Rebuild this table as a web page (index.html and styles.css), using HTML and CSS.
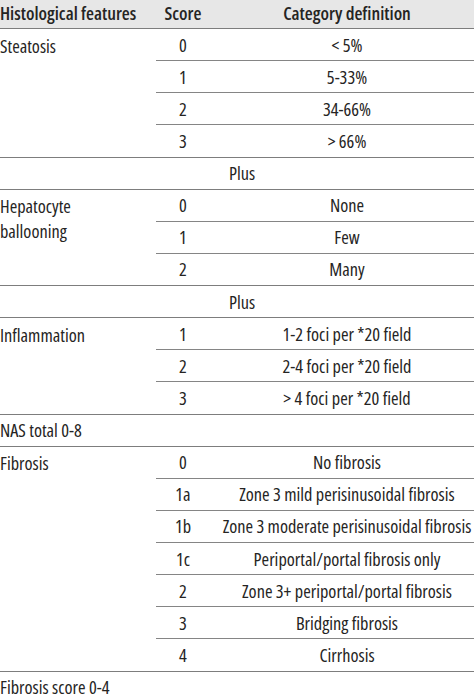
FILE: index.html
```html
<!DOCTYPE html>
<html lang="en">
<head>
<meta charset="utf-8">
<link rel="stylesheet" href="styles.css">
</head>
<body>
<table class="nas">
  <thead>
    <tr class="head">
      <th class="c-feat">Histological features</th>
      <th class="c-score">Score</th>
      <th class="c-def">Category definition</th>
    </tr>
  </thead>
  <tbody>
    <tr><td class="feat end" rowspan="4">Steatosis</td><td class="score">0</td><td class="def">&lt; 5%</td></tr>
    <tr><td class="score">1</td><td class="def">5-33%</td></tr>
    <tr><td class="score">2</td><td class="def">34-66%</td></tr>
    <tr><td class="score end">3</td><td class="def end">&gt; 66%</td></tr>
    <tr><td class="plus end" colspan="3">Plus</td></tr>
    <tr><td class="feat end" rowspan="3">Hepatocyte<br>ballooning</td><td class="score">0</td><td class="def">None</td></tr>
    <tr><td class="score">1</td><td class="def">Few</td></tr>
    <tr><td class="score end">2</td><td class="def end">Many</td></tr>
    <tr><td class="plus end" colspan="3">Plus</td></tr>
    <tr><td class="feat end" rowspan="3">Inflammation</td><td class="score">1</td><td class="def">1-2 foci per *20 field</td></tr>
    <tr><td class="score">2</td><td class="def">2-4 foci per *20 field</td></tr>
    <tr><td class="score end">3</td><td class="def end">&gt; 4 foci per *20 field</td></tr>
    <tr><td class="total end" colspan="3">NAS total 0-8</td></tr>
    <tr><td class="feat end" rowspan="7">Fibrosis</td><td class="score">0</td><td class="def">No fibrosis</td></tr>
    <tr><td class="score">1a</td><td class="def">Zone 3 mild perisinusoidal fibrosis</td></tr>
    <tr><td class="score">1b</td><td class="def">Zone 3 moderate perisinusoidal fibrosis</td></tr>
    <tr><td class="score">1c</td><td class="def">Periportal/portal fibrosis only</td></tr>
    <tr><td class="score">2</td><td class="def">Zone 3+ periportal/portal fibrosis</td></tr>
    <tr><td class="score">3</td><td class="def">Bridging fibrosis</td></tr>
    <tr><td class="score end">4</td><td class="def end">Cirrhosis</td></tr>
    <tr><td class="total" colspan="3">Fibrosis score 0-4</td></tr>
  </tbody>
</table>
</body>
</html>
```
FILE: styles.css
```css
html, body {
  margin: 0;
  padding: 0;
  background: #ffffff;
  overflow: hidden;
}

body {
  width: 474px;
  height: 699px;
  font-family: "Open Sans", "Liberation Sans", sans-serif;
  font-stretch: 75%;
  font-size: 18.3px;
  color: #252423;
}

.nas {
  width: 484px;
  border-collapse: collapse;
  border-spacing: 0;
  table-layout: fixed;
}

.nas th,
.nas td {
  padding: 0;
  white-space: nowrap;
}

.head th {
  background: #e7e7e7;
  height: 28px;
  line-height: 25px;
  vertical-align: top;
  font-weight: 650;
  border-bottom: 1px solid #7d7d7d;
}

.c-feat { width: 156px; text-align: left; }
.c-score { width: 54px; text-align: center; }
.c-def { width: 274px; text-align: center; }

.nas tbody td {
  height: 31.14px;
  line-height: 24px;
  vertical-align: middle;
}

.nas td.feat {
  vertical-align: top;
  text-align: left;
  line-height: 25px;
  padding-top: 3.5px;
}

.nas td.score,
.nas td.def {
  text-align: center;
  border-bottom: 1px solid #858585;
}

.nas td.end {
  border-bottom: 1px solid #7d7d7d;
}

.nas td.plus {
  text-align: center;
}

.nas td.total {
  text-align: left;
}
```
